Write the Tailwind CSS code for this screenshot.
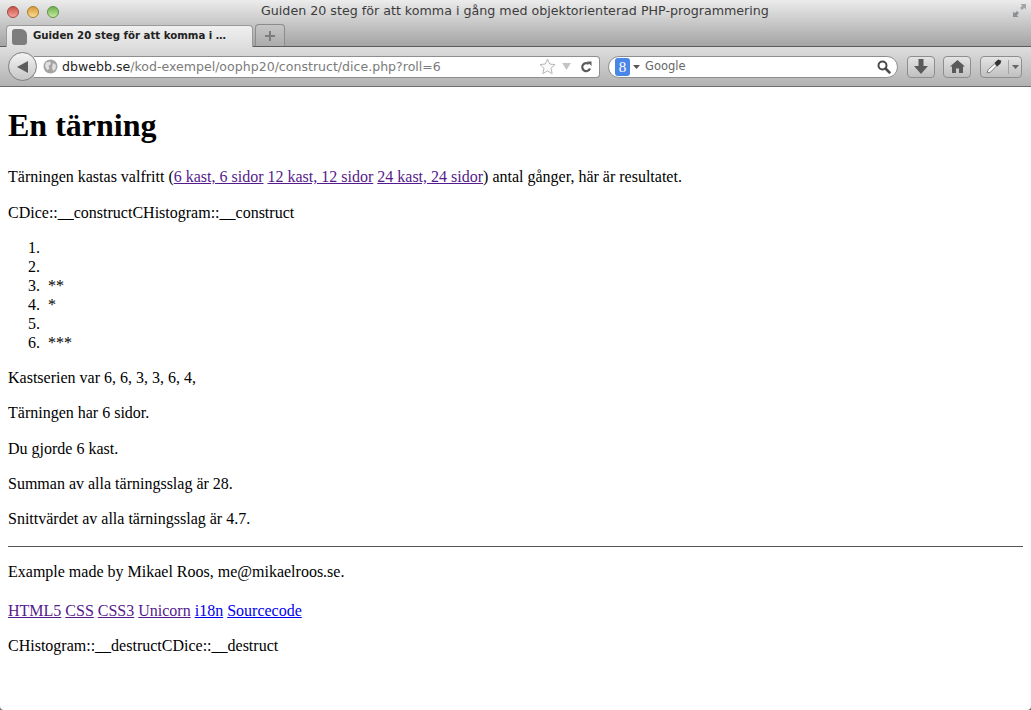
<!DOCTYPE html>
<html lang="sv">
<head>
<meta charset="utf-8">
<title>En tärning</title>
<script src="https://cdn.jsdelivr.net/npm/@tailwindcss/browser@4"></script>
</head>
<body class="bg-[#6a6a6a]">
<div class="w-[1031px] h-[710px] overflow-hidden flex flex-col bg-white rounded-b-[4px]">
  <!-- title + tabs -->
  <div class="h-[47px] shrink-0 flex flex-col border-b border-[#5c5c5c] bg-gradient-to-b from-[#ececec] to-[#a4a4a4] font-['DejaVu_Sans',sans-serif]">
    <div class="h-[23px] shrink-0 flex items-center pl-[7px] pr-[4px]">
      <div class="flex gap-[8px] w-[254px]">
        <span class="w-[12px] h-[12px] rounded-full border border-[#a3473f] bg-gradient-to-b from-[#c9504a] to-[#f5a49a]"></span>
        <span class="w-[12px] h-[12px] rounded-full border border-[#a87d2c] bg-gradient-to-b from-[#d89a34] to-[#fbdc92]"></span>
        <span class="w-[12px] h-[12px] rounded-full border border-[#5f9040] bg-gradient-to-b from-[#6cb04e] to-[#c6eaa2]"></span>
      </div>
      <div class="text-[12.670px] leading-none text-[#3c3c3c] whitespace-nowrap">Guiden 20 steg för att komma i gång med objektorienterad PHP-programmering</div>
      <svg class="ml-auto -mt-[2px]" width="15" height="15" viewBox="0 0 15 15"><path d="M8.500 1H14V6.500L12.300 4.800 10 7 8 5 10.200 2.700Z" fill="#a4a4a4"/><path d="M6.500 14H1V8.500L2.700 10.200 5 8 7 10 4.800 12.300Z" fill="#8a8f94"/></svg>
    </div>
    <div class="flex-1 flex items-end pl-[6px] gap-[2px]">
      <div class="w-[247px] h-[22px] -mb-[1px] relative z-10 flex items-center gap-[6px] pl-[5px] rounded-t-[4px] border border-b-0 border-[#9a9a9a] bg-gradient-to-b from-[#f0f0f0] to-[#dedede]">
        <span class="w-[15px] h-[16px] rounded-[3px] rounded-tr-[6px] bg-[#7d7d7d]"></span>
        <span class="text-[10.200px] font-bold leading-none text-[#222] whitespace-nowrap">Guiden 20 steg för att komma i …</span>
      </div>
      <div class="w-[30px] h-[22px] flex items-center justify-center rounded-t-[4px] border border-b-0 border-[#8c8c8c] bg-gradient-to-b from-[#c6c6c6] to-[#ababab]">
        <svg width="12" height="12" viewBox="0 0 12 12"><path d="M6 1V11M1 6H11" stroke="#7c7c7c" stroke-width="2"/></svg>
      </div>
    </div>
  </div>
  <!-- toolbar -->
  <div class="h-[40px] shrink-0 flex items-center pl-[8px] border-b border-[#6e6e6e] bg-gradient-to-b from-[#dedede] to-[#b2b2b2] font-['DejaVu_Sans',sans-serif]">
    <div class="w-[29px] h-[29px] shrink-0 relative z-10 -mr-[3px] rounded-full border border-[#7f7f7f] bg-gradient-to-b from-[#f4f4f4] to-[#c6c6c6] flex items-center justify-center">
      <svg width="14" height="14" viewBox="0 0 14 14"><path d="M1 7L12 1V13Z" fill="#5c5c5c"/></svg>
    </div>
    <div class="w-[566px] h-[22px] shrink-0 flex items-center pl-[9px] pr-[7px] rounded-r-[4px] border border-[#8e8e8e] border-l-0 bg-white">
      <svg width="15" height="15" viewBox="0 0 15 15" class="shrink-0"><circle cx="7.500" cy="7.500" r="7" fill="#a4a4a4"/><path d="M3 3.500L7 2.500 8 5 5.500 7 6.500 10 4 11 2 7ZM10 4L13 6 12.500 10 10 12 9 8.500Z" fill="#e0e0e0"/></svg>
      <span class="ml-[4px] pt-[1px] text-[12.570px] leading-none text-[#7b7b7b] whitespace-nowrap"><span class="text-[#1f1f1f]">dbwebb.se</span>/kod-exempel/oophp20/construct/dice.php?roll=6</span>
      <svg class="ml-auto shrink-0" width="17" height="17" viewBox="0 0 17 17"><path d="M8.500 1L10.700 6 16 6.600 12 10.200 13.200 15.700 8.500 12.900 3.800 15.700 5 10.200 1 6.600 6.300 6Z" fill="#fafafa" stroke="#b8b8b8"/></svg>
      <svg class="ml-[6px] shrink-0" width="9" height="7" viewBox="0 0 10 8"><path d="M0 0H10L5 8Z" fill="#c4c4c4"/></svg>
      <svg class="ml-[9px] shrink-0" width="12" height="12" viewBox="0 0 12 12"><path d="M10 7.500A4 4 0 1 1 8.800 3" fill="none" stroke="#5c5c5c" stroke-width="2.200"/><path d="M7 0.500L11.500 0.500 11.500 5Z" fill="#5c5c5c"/></svg>
    </div>
    <div class="ml-[8px] w-[290px] h-[22px] shrink-0 flex items-center pl-[6px] pr-[6px] rounded-full border border-[#8e8e8e] bg-white">
      <span class="w-[15px] h-[18px] shrink-0 rounded-[3px] bg-[#4a86e8] text-white text-[15px] leading-[18px] text-center font-['Liberation_Serif',serif]">8</span>
      <svg class="ml-[3px] shrink-0" width="7" height="4" viewBox="0 0 7 4"><path d="M0 0H7L3.500 4Z" fill="#555"/></svg>
      <span class="ml-[5px] pt-[1px] text-[11.500px] leading-none text-[#666]">Google</span>
      <svg class="ml-auto shrink-0" width="14" height="14" viewBox="0 0 14 14"><circle cx="5.500" cy="5.500" r="4" fill="none" stroke="#4a4a4a" stroke-width="2"/><path d="M8.500 8.500L12.500 12.500" stroke="#4a4a4a" stroke-width="2.500" stroke-linecap="round"/></svg>
    </div>
    <div class="ml-[9px] w-[28px] h-[22px] shrink-0 flex items-center justify-center rounded-[4px] border border-[#8e8e8e] bg-gradient-to-b from-[#e4e4e4] to-[#c0c0c0]">
      <svg width="14" height="15" viewBox="0 0 14 15"><path d="M4.500 0H9.500V7H14L7 15 0 7H4.500Z" fill="#5a5a5a"/></svg>
    </div>
    <div class="ml-[8px] w-[28px] h-[22px] shrink-0 flex items-center justify-center rounded-[4px] border border-[#8e8e8e] bg-gradient-to-b from-[#e4e4e4] to-[#c0c0c0]">
      <svg width="15" height="13" viewBox="0 0 15 13"><path d="M7.500 0L15 6.500H13V13H9V8.500H6V13H2V6.500H0Z" fill="#5a5a5a"/></svg>
    </div>
    <div class="ml-[9px] w-[42px] h-[22px] shrink-0 flex items-center rounded-[4px] border border-[#8e8e8e] bg-gradient-to-b from-[#e4e4e4] to-[#c0c0c0]">
      <div class="w-[28px] h-[14px] flex items-center justify-center border-r border-[#a4a4a4]">
        <svg width="17" height="15" viewBox="0 0 16 14"><path d="M1 13L2 10 8 4.500 10 6.500 4 12.500Z" fill="#f6f6f6" stroke="#7c7c7c" stroke-width="0.900"/><path d="M8 3.500L11.500 0.500 14.500 1.500 13.500 4.500 10.500 7Z" fill="#333"/></svg>
      </div>
      <svg class="ml-[3px]" width="7" height="4" viewBox="0 0 7 4"><path d="M0 0H7L3.500 4Z" fill="#666"/></svg>
    </div>
  </div>
  <!-- page -->
  <div class="flex-1 px-[8px] pt-[20px] font-['Liberation_Serif',serif] text-[16px] leading-[19px] text-black">
    <h1 class="text-[32px] leading-[37px] font-bold">En tärning</h1>
    <p class="mt-[23px]">Tärningen kastas valfritt (<a href="#" class="underline text-[#551a8b]">6 kast, 6 sidor</a> <a href="#" class="underline text-[#551a8b]">12 kast, 12 sidor</a> <a href="#" class="underline text-[#551a8b]">24 kast, 24 sidor</a>) antal gånger, här är resultatet.</p>
    <p class="mt-[17px]">CDice::__constructCHistogram::__construct</p>
    <ol class="mt-[16px] pl-[40px] list-decimal marker:[content:counter(list-item)'.\00a0\00a0']">
      <li>&nbsp;</li>
      <li>&nbsp;</li>
      <li>**</li>
      <li>*</li>
      <li>&nbsp;</li>
      <li>***</li>
    </ol>
    <p class="mt-[16px]">Kastserien var 6, 6, 3, 3, 6, 4,</p>
    <p class="mt-[16.250px]">Tärningen har 6 sidor.</p>
    <p class="mt-[16.250px]">Du gjorde 6 kast.</p>
    <p class="mt-[16.250px]">Summan av alla tärningsslag är 28.</p>
    <p class="mt-[16.250px]">Snittvärdet av alla tärningsslag är 4.7.</p>
    <hr class="mt-[18px] border-t border-[#555]">
    <p class="mt-[15px]">Example made by Mikael Roos, me@mikaelroos.se.</p>
    <p class="mt-[20px]"><a href="#" class="underline text-[#551a8b]">HTML5</a> <a href="#" class="underline text-[#551a8b]">CSS</a> <a href="#" class="underline text-[#551a8b]">CSS3</a> <a href="#" class="underline text-[#551a8b]">Unicorn</a> <a href="#" class="underline text-[#0000ee]">i18n</a> <a href="#" class="underline text-[#0000ee]">Sourcecode</a></p>
    <p class="mt-[16px]">CHistogram::__destructCDice::__destruct</p>
  </div>
</div>
</body>
</html>
